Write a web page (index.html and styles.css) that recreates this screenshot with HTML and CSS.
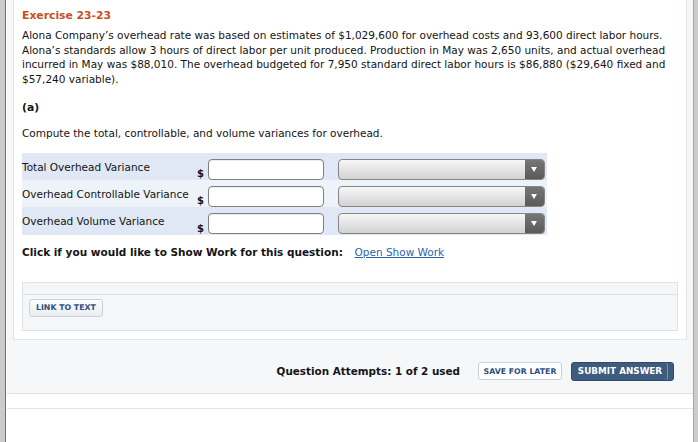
FILE: index.html
```html
<!DOCTYPE html>
<html lang="en">
<head>
    <meta charset="UTF-8">
    <meta name="viewport" content="width=device-width, initial-scale=1.0">
    <title>Exercise 23-23</title>
    <link rel="stylesheet" href="styles.css">
</head>
<body>
    <div class="frame">
        <div class="page">
            <div class="panel">
                <div class="question">
                    <h2 class="title">Exercise 23-23</h2>
                    <p class="prompt">Alona Company’s overhead rate was based on estimates of $1,029,600 for overhead costs and 93,600 direct labor hours. Alona’s standards allow 3 hours of direct labor per unit produced. Production in May was 2,650 units, and actual overhead incurred in May was $88,010. The overhead budgeted for 7,950 standard direct labor hours is $86,880 ($29,640 fixed and $57,240 variable).</p>

                    <h3 class="part">(a)</h3>
                    <p class="instruction">Compute the total, controllable, and volume variances for overhead.</p>

                    <div class="answers">
                        <div class="answer-row">
                            <span class="answer-label">Total Overhead Variance</span>
                            <span class="dollar">$</span>
                            <span class="field"><input type="text" class="amount"></span>
                            <span class="field"><span class="select"><span class="select-arrow"></span></span></span>
                        </div>
                        <div class="answer-row alt">
                            <span class="answer-label">Overhead Controllable Variance</span>
                            <span class="dollar">$</span>
                            <span class="field"><input type="text" class="amount"></span>
                            <span class="field"><span class="select"><span class="select-arrow"></span></span></span>
                        </div>
                        <div class="answer-row">
                            <span class="answer-label">Overhead Volume Variance</span>
                            <span class="dollar">$</span>
                            <span class="field"><input type="text" class="amount"></span>
                            <span class="field"><span class="select"><span class="select-arrow"></span></span></span>
                        </div>
                    </div>

                    <p class="show-work">Click if you would like to Show Work for this question: <a href="#" class="show-link">Open Show Work</a></p>

                    <div class="resources">
                        <div class="resources-head"></div>
                        <div class="resources-body">
                            <button class="btn-light">LINK TO TEXT</button>
                        </div>
                    </div>
                </div>

                <div class="actions">
                    <span class="attempts">Question Attempts: 1 of 2 used</span>
                    <button class="btn-light btn-save">SAVE FOR LATER</button>
                    <button class="btn-submit">SUBMIT ANSWER</button>
                </div>
            </div>
            <div class="below"></div>
        </div>
    </div>
</body>
</html>
```

FILE: styles.css
```css
body {
    margin: 0;
    font-family: "DejaVu Sans", Verdana, sans-serif;
    font-size: 10.5px;
    color: #141414;
    background: #fff;
}
.frame {
    margin-right: 2px;
    min-height: 100vh;
    border-left: 5px solid #cbcbcb;
    border-right: 4px solid #cbcbcb;
    box-sizing: border-box;
}
.page {
    min-height: 100vh;
    border-left: 1px solid #6f6f6f;
    border-right: 1px solid #a8a8a8;
    padding-left: 1px;
    box-sizing: border-box;
}
.panel {
    background: #f5f7f9;
    border-bottom: 1px solid #dfe3e8;
    padding: 0 6px 12px 6px;
}
.question {
    background: #fff;
    border: 1px solid #dfe4ea;
    border-top: none;
    padding: 9px 8px 8px 8px;
}
.title {
    margin: 0;
    font-size: 10.8px;
    line-height: 14px;
    color: #c9501d;
}
.prompt {
    margin: 5px 0 0 0;
    line-height: 14.7px;
}
.part {
    margin: 14px 0 0 0;
    font-size: 10.8px;
    line-height: 14px;
}
.instruction {
    margin: 11px 0 0 0;
    line-height: 14px;
}

/* answer table */
.answers {
    width: 525px;
    margin-top: 13px;
}
.answer-row {
    display: flex;
    height: 27px;
    background: #dfe8f4;
}
.answer-row:last-child {
    height: 28px;
}
.answer-row.alt {
    background: #eef3f9;
}
.answer-label {
    width: 175px;
    align-self: center;
    padding-top: 1px;
}
.dollar {
    width: 11px;
    font-weight: bold;
    font-size: 10px;
    align-self: flex-end;
    padding-bottom: 1px;
}
.field {
    padding-top: 6px;
}
.amount {
    display: block;
    width: 116px;
    height: 21px;
    margin: 0;
    padding: 0;
    border: 1px solid #7f7f7f;
    border-radius: 4px;
    box-sizing: border-box;
    background: #fff;
    box-shadow: inset 0 1px 1px rgba(0, 0, 0, 0.08);
}
.select {
    display: block;
    position: relative;
    width: 207px;
    height: 21px;
    margin-left: 14px;
    border: 1px solid #858585;
    border-radius: 4px;
    box-sizing: border-box;
    background: linear-gradient(#f7f7f7, #d2d2d2);
    overflow: hidden;
}
.select-arrow {
    position: absolute;
    top: 0;
    right: 0;
    bottom: 0;
    width: 19px;
    background: linear-gradient(#767676, #5a5a5a);
}
.select-arrow::after {
    content: "";
    position: absolute;
    left: 6px;
    top: 7px;
    border-left: 3.5px solid transparent;
    border-right: 3.5px solid transparent;
    border-top: 5px solid #fff;
}

.show-work {
    margin: 10px 0 0 0;
    font-weight: bold;
    font-size: 10.5px;
    line-height: 14px;
}
.show-link {
    margin-left: 8px;
    font-weight: normal;
    font-size: 10.5px;
    color: #2a66ab;
}

/* resources box */
.resources {
    margin-top: 23px;
    border: 1px solid #dde2e8;
    background: #f4f6f8;
}
.resources-head {
    height: 11px;
    border-bottom: 1px solid #dde2e8;
}
.resources-body {
    padding: 4px 6px 13px 6px;
}
.btn-light {
    height: 18px;
    padding: 0 6px;
    font-family: "DejaVu Sans", Verdana, sans-serif;
    font-weight: bold;
    font-size: 7.8px;
    color: #2d4e7e;
    background: linear-gradient(#fbfcfd, #e9edf1);
    border: 1px solid #c9d1da;
    border-radius: 3px;
}

/* bottom actions */
.actions {
    display: flex;
    justify-content: flex-end;
    align-items: center;
    padding: 22px 13px 0 0;
}
.attempts {
    font-weight: bold;
    font-size: 10.4px;
    margin-right: 18px;
}
.btn-save {
    width: 84px;
    padding: 0;
    background: #fff;
    margin-right: 9px;
}
.btn-submit {
    width: 103px;
    height: 19px;
    padding: 0 5px 0 0;
    font-family: "DejaVu Sans", Verdana, sans-serif;
    font-weight: bold;
    font-size: 8.8px;
    color: #fff;
    background: #3d5c80;
    border: 1px solid #2f4a6a;
    border-radius: 3px;
    box-shadow: inset -5px 0 0 #3d5c80, inset -6px 0 0 #7c93ad;
}
.below {
    height: 14px;
    border-bottom: 1px solid #e3e6ea;
}
```
